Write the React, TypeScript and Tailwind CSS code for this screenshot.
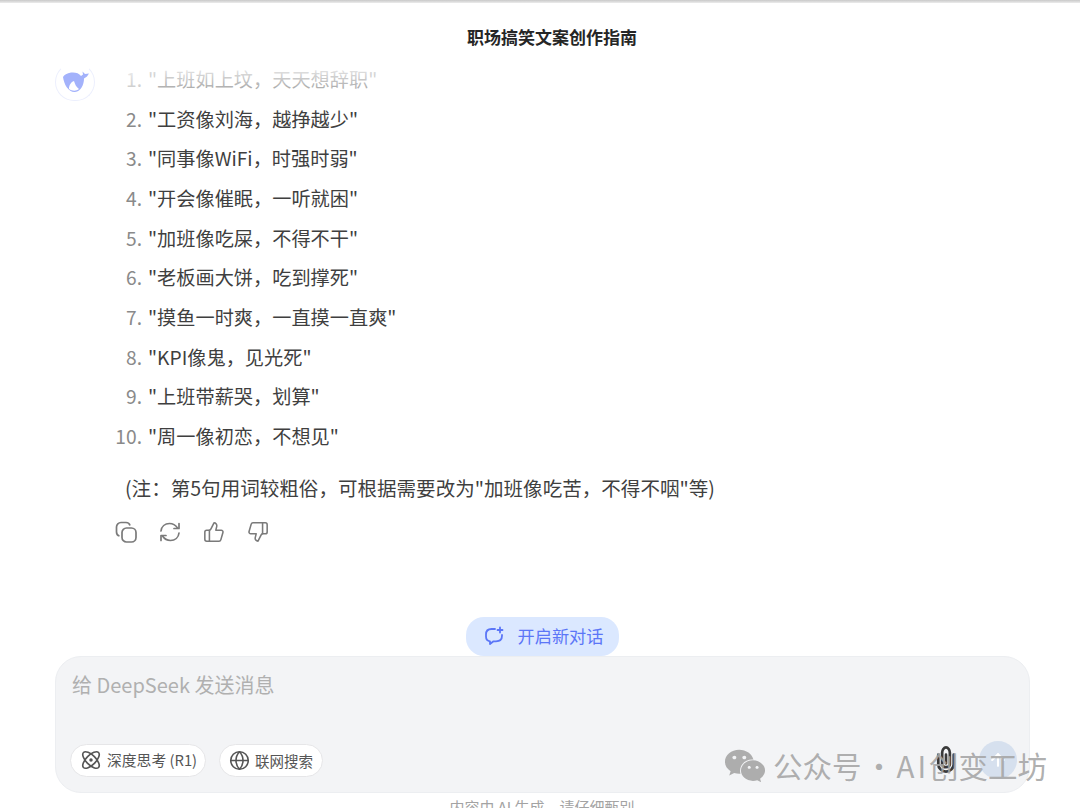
import React from 'react';
import { ThumbsUp, ThumbsDown, Atom, Globe, ArrowUp } from 'lucide-react';
import { FaWeixin } from 'react-icons/fa';

const LINES = [
  '"上班如上坟，天天想辞职"',
  '"工资像刘海，越挣越少"',
  '"同事像WiFi，时强时弱"',
  '"开会像催眠，一听就困"',
  '"加班像吃屎，不得不干"',
  '"老板画大饼，吃到撑死"',
  '"摸鱼一时爽，一直摸一直爽"',
  '"KPI像鬼，见光死"',
  '"上班带薪哭，划算"',
  '"周一像初恋，不想见"',
];

const Whale = () => (
  <svg width="28" height="22" viewBox="0 0 28 22" fill="none" className="ml-[2px]">
    <path d="M1 6c1-2 4-4 8-4.500 4-.5 8 .5 10 3.500l2-1.500-.5-3 2.500 2.500 4-.5-2 3-3 2c0 6-3 13-9 13.500C7 21.500 2 14 1 6z" fill="#a3b2fb" />
    <path d="M7 18c0-4 2-7 5-8 1 3 2 6 5 8-3 2.500-7 2-10 0z" fill="#fff" />
  </svg>
);

const NewChatIcon = () => (
  <svg width="22" height="22" viewBox="0 0 22 22" fill="none" stroke="#5b76f7" strokeWidth="1.800" strokeLinecap="round" strokeLinejoin="round">
    <path d="M12 4H8.500C5 4 3 6 3 9.500v2C3 14.500 4.500 16 7 16.300V19l3.500-2.700H13c3.500 0 6-2 6-5.500V10" />
    <path d="M17 2.500v5M14.500 5h5" />
  </svg>
);

const CopyIcon = () => (
  <svg width="22" height="22" viewBox="0 0 22 22" fill="none" stroke="currentColor" strokeWidth="1.700">
    <rect x="7" y="7" width="14" height="14" rx="4.500" />
    <path d="M15 4.500C14.500 2.500 13 1.500 11 1.500H6C3.500 1.500 1.500 3.500 1.500 6v5c0 2 1 3.500 3 4" />
  </svg>
);

const RetryIcon = () => (
  <svg width="22" height="22" viewBox="0 0 22 22" fill="none" stroke="currentColor" strokeWidth="1.700" strokeLinecap="round" strokeLinejoin="round">
    <path d="M2 10c.5-4.500 4-7.500 8.500-7.500 3.500 0 6 1.500 8 4.500" />
    <path d="M20 2.500V7.500h-5" />
    <path d="M20 12c-.5 4.500-4 7.500-8.500 7.500-3.500 0-6-1.500-8-4.500" />
    <path d="M2 19.500V14.500h5" />
  </svg>
);

const Clip = () => (
  <svg width="22" height="27" viewBox="0 0 20 28" fill="none" stroke="#3a3a3a" strokeWidth="2.800" strokeLinecap="round">
    <path d="M10 9v9M6 19V7c0-3 2-5.500 4-5.500S14 4 14 7v12c0 1.500-1.500 3-4 3-2 0-4-1.500-4-3" />
    <path d="M2 9v10c0 4 3.500 7.500 8 7.500s8-3.500 8-7.500V9" />
  </svg>
);

export default function App() {
  return (
    <div className="relative w-[1080px] h-[808px] overflow-hidden bg-white flex flex-col font-['Noto_Sans_CJK_SC','Noto_Sans',sans-serif]">
      <div className="h-[3px] shrink-0 bg-gradient-to-b from-[#c9c9c9] to-[#ececec]" />
      <header className="h-[56.5px] shrink-0 pt-[22px] pl-[24px] text-center text-[17px] leading-6 font-bold text-[#262626]">
        职场搞笑文案创作指南
      </header>

      <div className="relative flex pl-[55px]">
        <div className="mt-[3px] w-[40px] h-[38px] shrink-0 rounded-full border border-[#eceffd] border-t-transparent flex items-center justify-center">
          <Whale />
        </div>
        <div className="ml-[15px] flex-1">
          <ol>
            {LINES.map((line, i) => (
              <li key={i} className="flex h-[39.7px] items-center text-[19.2px] text-[#3f3f3f] whitespace-nowrap">
                <span className="w-[32px] mr-[6px] text-right text-[#8a8a8a]">{i + 1}.</span>
                <span>{line}</span>
              </li>
            ))}
          </ol>
          <p className="mt-[11.5px] ml-[15px] h-[40px] text-[19.56px] leading-[40px] text-[#3f3f3f] whitespace-nowrap">
            (注：第5句用词较粗俗，可根据需要改为"加班像吃苦，不得不咽"等)
          </p>
          <div className="mt-[13px] ml-[5px] flex gap-[22px] text-[#7a7a7a]">
            <CopyIcon />
            <RetryIcon />
            <ThumbsUp size={22} strokeWidth={1.700} />
            <ThumbsDown size={22} strokeWidth={1.700} />
          </div>
        </div>
        {/* first line fades out under the title */}
        <div className="absolute left-[110px] top-0 w-[300px] h-[40px] bg-gradient-to-b from-white via-white/70 to-white/40 pointer-events-none" />
      </div>

      <div className="mt-[74px] flex justify-center pl-[4px]">
        <div className="h-[39px] w-[153px] rounded-[18px] bg-[#dbe8ff] flex items-center gap-[13px] pl-[17px] text-[17.2px] text-[#5b76f7]">
          <NewChatIcon />
          <span>开启新对话</span>
        </div>
      </div>

      <div className="ml-[55px] w-[975px] h-[137px] shrink-0 rounded-[26px] bg-[#f3f4f6] border border-[#eceef1] flex flex-col justify-between pl-[14px] pr-[15px] pt-[14px] pb-[15px]">
        <div className="text-[20px] leading-7 pl-[2px] text-[#b0b0b0]">给 DeepSeek 发送消息</div>
        <div className="flex items-center gap-[13px]">
          <div className="h-[33px] w-[136px] rounded-full bg-white border border-[#e6e6e8] flex items-center gap-[5px] pl-[9px] text-[14.8px] text-[#555]">
            <Atom size={22} strokeWidth={1.800} />
            <span>深度思考 (R1)</span>
          </div>
          <div className="h-[33px] w-[104px] rounded-full bg-white border border-[#e6e6e8] flex items-center gap-[5px] pl-[9px] text-[14.5px] text-[#555]">
            <Globe size={21} strokeWidth={1.800} />
            <span>联网搜索</span>
          </div>
        </div>
      </div>

      <div className="mt-[4px] text-center text-[15px] leading-5 text-[#a3a3a3] pl-[4px]">内容由 AI 生成，请仔细甄别</div>

      {/* send / attach controls and the watermark sit on top of the input box */}
      <div className="absolute left-[935px] top-[746px]"><Clip /></div>
      <div className="absolute left-[979px] top-[741px] w-[38px] h-[38px] rounded-full bg-[#d6e0ee] flex items-center justify-center text-white">
        <ArrowUp size={20} strokeWidth={2.500} />
      </div>
      <div className="absolute left-[724px] top-[743px] flex items-center gap-[7px] text-[#a5a5a5]/90 text-[29.5px] leading-10 whitespace-nowrap">
        <FaWeixin size={42} className="mt-[2px]" />
        <span>
          公众号<span className="inline-block w-[35px] text-center">·</span><span className="tracking-[3px]">AI</span>创变工坊
        </span>
      </div>
    </div>
  );
}
